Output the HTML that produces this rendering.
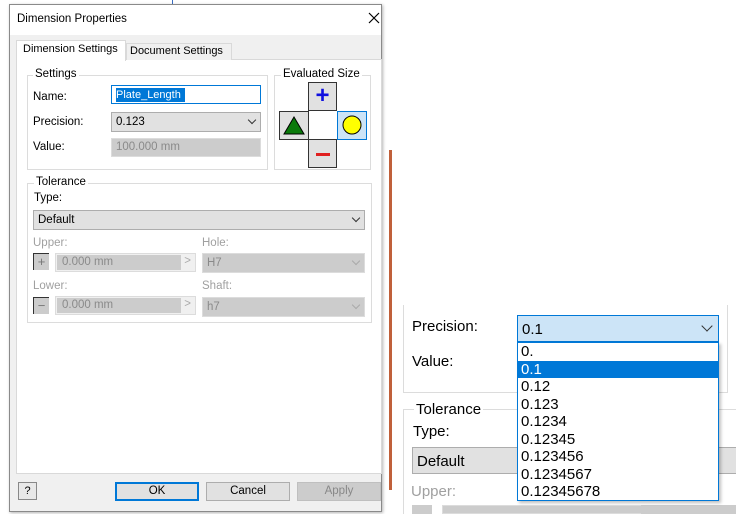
<!DOCTYPE html>
<html><head><style>
*{margin:0;padding:0;box-sizing:border-box}
body{width:736px;height:514px;overflow:hidden;background:#fff;font-family:"Liberation Sans",sans-serif;font-size:11.5px;color:#000;position:relative}
.a{position:absolute}
.lbl{position:absolute;font-size:11.5px}
.dis{color:#a0a0a0}
.grp{position:absolute;border:1px solid #dcdcdc}
.gt{position:absolute;background:#fff;padding:0 2px;font-size:11.5px}
.cb{position:absolute;background:#e1e1e1;border:1px solid #adadad;font-size:11.5px;padding:3px 4px}
.chev{position:absolute;right:5px;top:4px;width:6px;height:6px;border-right:1px solid #333;border-bottom:1px solid #333;transform:rotate(45deg)}
.btn{position:absolute;background:#e1e1e1;border:1px solid #adadad;text-align:center;font-size:11.5px;line-height:16px}
.eb{position:absolute;background:#e1e1e1;border:1px solid #333}
</style></head><body>
<div class="a" style="left:172px;top:0;width:1px;height:5px;background:#3a6cc0"></div>
<div class="a" style="left:389px;top:150px;width:3px;height:340px;background:#c0603a"></div>
<!-- dialog -->
<div class="a" style="left:9px;top:4px;width:373px;height:508px;background:#f0f0f0;border:1px solid #8a8a8a;box-shadow:1px 1px 3px rgba(0,0,0,.3)"></div>
<div class="a" style="left:10px;top:5px;width:371px;height:30px;background:#fff"></div>
<div class="lbl" style="left:17px;top:13px">Dimension Properties</div>
<svg class="a" style="left:368px;top:12px" width="12" height="12"><path d="M1 1L11 11M11 1L1 11" stroke="#000" stroke-width="1.2"/></svg>
<!-- tabs -->
<div class="a" style="left:16px;top:59px;width:366px;height:415px;background:#fff;border:1px solid #d9d9d9"></div>
<div class="a" style="left:16px;top:40px;width:110px;height:21px;background:#fff;border:1px solid #d9d9d9;border-bottom:none"></div>
<div class="lbl" style="left:23px;top:43px;font-size:11px">Dimension Settings</div>
<div class="a" style="left:126px;top:43px;width:106px;height:17px;background:#f0f0f0;border:1px solid #d9d9d9;border-bottom:none"></div>
<div class="lbl" style="left:130px;top:45px;font-size:11px">Document Settings</div>
<!-- settings group -->
<div class="grp" style="left:27px;top:75px;width:241px;height:95px"></div>
<div class="gt" style="left:33px;top:68px">Settings</div>
<div class="lbl" style="left:33px;top:91px">Name:</div>
<div class="a" style="left:111px;top:85px;width:150px;height:19px;border:1px solid #0078d7;background:#fff"></div>
<div class="a" style="left:116px;top:88px;width:69px;height:14px;background:#0078d7;color:#fff;font-size:11px;line-height:14px">Plate_Length</div>
<div class="lbl" style="left:33px;top:116px">Precision:</div>
<div class="cb" style="left:111px;top:112px;width:150px;height:20px">0.123<div class="chev"></div></div>
<div class="lbl" style="left:33px;top:141px">Value:</div>
<div class="a dis" style="left:111px;top:138px;width:150px;height:19px;background:#ccc;border:1px solid #dcdcdc;padding:2px 4px;color:#8a8a8a">100.000 mm</div>
<!-- evaluated -->
<div class="grp" style="left:274px;top:75px;width:97px;height:95px"></div>
<div class="gt" style="left:281px;top:68px">Evaluated Size</div>
<div class="eb" style="left:308px;top:82px;width:29px;height:29px;color:#1010e0;font-size:24px;font-weight:bold;text-align:center;line-height:26px">+</div>
<div class="a" style="left:308px;top:111px;width:30px;height:29px;background:#fff"></div>
<div class="eb" style="left:279px;top:111px;width:30px;height:29px"><svg width="28" height="27"><polygon points="14,5 24,22 4,22" fill="#0a7a0a" stroke="#000"/></svg></div>
<div class="eb" style="left:337px;top:111px;width:30px;height:29px;background:#cce4f7;border-color:#0078d7"><svg width="28" height="27"><circle cx="14" cy="13" r="9" fill="#ff0" stroke="#000"/></svg></div>
<div class="eb" style="left:308px;top:139px;width:29px;height:29px"><div class="a" style="left:7px;top:13px;width:14px;height:3px;background:#e02020"></div></div>
<!-- tolerance -->
<div class="grp" style="left:27px;top:183px;width:345px;height:140px"></div>
<div class="gt" style="left:34px;top:176px">Tolerance</div>
<div class="lbl" style="left:34px;top:192px">Type:</div>
<div class="cb" style="left:33px;top:210px;width:332px;height:20px">Default<div class="chev"></div></div>
<div class="lbl dis" style="left:33px;top:237px">Upper:</div>
<div class="lbl dis" style="left:202px;top:237px">Hole:</div>
<div class="a" style="left:33px;top:253px;width:16px;height:17px;background:#ccc;border-left:1px solid #333;border-top:1px solid #333;color:#777;text-align:center;font-size:13px;line-height:15px">+</div>
<div class="a" style="left:55px;top:253px;width:141px;height:19px;background:#f0f0f0;border:1px solid #dcdcdc"><div class="a" style="left:1px;top:1px;width:124px;height:15px;background:#ccc;color:#8a8a8a;padding-left:5px;line-height:15px">0.000 mm</div><div class="a" style="right:4px;top:1px;color:#aaa">&gt;</div></div>
<div class="cb dis" style="left:202px;top:253px;width:163px;height:20px;background:#ccc;border-color:#dcdcdc;color:#8a8a8a">H7<div class="chev" style="border-color:#aaa"></div></div>
<div class="lbl dis" style="left:33px;top:280px">Lower:</div>
<div class="lbl dis" style="left:202px;top:280px">Shaft:</div>
<div class="a" style="left:33px;top:297px;width:16px;height:17px;background:#ccc;border-left:1px solid #333;border-top:1px solid #333;color:#777;text-align:center;font-size:13px;line-height:15px">−</div>
<div class="a" style="left:55px;top:296px;width:141px;height:19px;background:#f0f0f0;border:1px solid #dcdcdc"><div class="a" style="left:1px;top:1px;width:124px;height:15px;background:#ccc;color:#8a8a8a;padding-left:5px;line-height:15px">0.000 mm</div><div class="a" style="right:4px;top:1px;color:#aaa">&gt;</div></div>
<div class="cb dis" style="left:202px;top:297px;width:163px;height:20px;background:#ccc;border-color:#dcdcdc;color:#8a8a8a">h7<div class="chev" style="border-color:#aaa"></div></div>
<!-- bottom buttons -->
<div class="a" style="left:18px;top:482px;width:19px;height:18px;border:1px solid #888;background:#e8e8e8;text-align:center;font-size:11px;line-height:16px">?</div>
<div class="btn" style="left:115px;top:482px;width:84px;height:19px;border:2px solid #0078d7;line-height:15px">OK</div>
<div class="btn" style="left:206px;top:482px;width:84px;height:19px">Cancel</div>
<div class="btn" style="left:297px;top:482px;width:84px;height:19px;background:#ccc;border-color:#bfbfbf;color:#888">Apply</div>
<!-- right zoomed -->
<div class="a" style="left:403px;top:305px;width:1px;height:88px;background:#dcdcdc"></div>
<div class="a" style="left:403px;top:392px;width:325px;height:1px;background:#dcdcdc"></div>
<div class="a" style="left:727px;top:305px;width:1px;height:88px;background:#dcdcdc"></div>
<div class="a" style="left:403px;top:409px;width:333px;height:1px;background:#dcdcdc"></div>
<div class="a" style="left:403px;top:409px;width:1px;height:105px;background:#dcdcdc"></div>
<div class="a" style="left:412px;top:318px;font-size:15px">Precision:</div>
<div class="a" style="left:412px;top:353px;font-size:15px">Value:</div>
<div class="a" style="left:414px;top:401px;font-size:15px;background:#fff;padding:0 2px">Tolerance</div>
<div class="a" style="left:413px;top:423px;font-size:15px">Type:</div>
<div class="a" style="left:412px;top:447px;width:330px;height:27px;background:#e1e1e1;border:1px solid #adadad;font-size:15px;padding:5px 4px">Default</div>
<div class="a dis" style="left:411px;top:483px;font-size:15px">Upper:</div>
<div class="a" style="left:412px;top:505px;width:20px;height:9px;background:#ccc"></div>
<div class="a" style="left:442px;top:505px;width:200px;height:9px;background:#ccc;border:1px solid #dcdcdc"></div>
<div class="a" style="left:641px;top:505px;width:95px;height:9px;background:#ccc"></div>
<div class="a" style="left:517px;top:315px;width:202px;height:27px;background:#cce4f7;border:1px solid #0078d7;font-size:15px;padding:5px 4px">0.1<div class="a" style="right:7px;top:6px;width:8px;height:8px;border-right:1.5px solid #333;border-bottom:1.5px solid #333;transform:rotate(45deg)"></div></div>
<div class="a" style="left:517px;top:342px;width:202px;height:159px;background:#fff;border:1px solid #0078d7;box-shadow:2px 2px 3px rgba(0,0,0,.25);font-size:15px;line-height:17.5px">
<div style="padding-left:3px">0.</div>
<div style="padding-left:3px;background:#0078d7;color:#fff">0.1</div>
<div style="padding-left:3px">0.12</div>
<div style="padding-left:3px">0.123</div>
<div style="padding-left:3px">0.1234</div>
<div style="padding-left:3px">0.12345</div>
<div style="padding-left:3px">0.123456</div>
<div style="padding-left:3px">0.1234567</div>
<div style="padding-left:3px">0.12345678</div>
</div>
</body></html>
